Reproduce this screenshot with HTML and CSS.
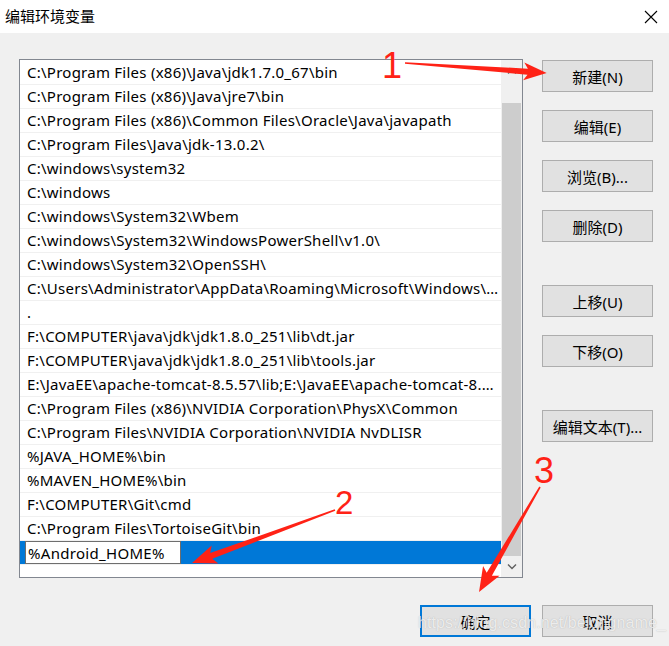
FILE: index.html
```html
<!DOCTYPE html>
<html lang="zh-CN">
<head>
  <meta charset="UTF-8">
  <title>编辑环境变量</title>
  <link rel="stylesheet" href="styles.css">
</head>
<body>
  <!-- 标题栏 -->
  <div class="title-bar">
    <div class="title-text">编辑环境变量</div>
    <div class="close-btn">
      <svg width="14" height="14" viewBox="0 0 14 14"><path d="M1 1 L13 13 M13 1 L1 13" stroke="#000" stroke-width="1.1" fill="none"/></svg>
    </div>
  </div>

  <div class="dialog-body">
    <div class="main-row">
      <!-- 路径列表 -->
      <div class="path-list">
        <div class="list-rows">
          <div class="list-item">C:\Program Files (x86)\Java\jdk1.7.0_67\bin</div>
          <div class="list-item">C:\Program Files (x86)\Java\jre7\bin</div>
          <div class="list-item">C:\Program Files (x86)\Common Files\Oracle\Java\javapath</div>
          <div class="list-item">C:\Program Files\Java\jdk-13.0.2\</div>
          <div class="list-item">C:\windows\system32</div>
          <div class="list-item">C:\windows</div>
          <div class="list-item">C:\windows\System32\Wbem</div>
          <div class="list-item">C:\windows\System32\WindowsPowerShell\v1.0\</div>
          <div class="list-item">C:\windows\System32\OpenSSH\</div>
          <div class="list-item">C:\Users\Administrator\AppData\Roaming\Microsoft\Windows\Start Menu</div>
          <div class="list-item">.</div>
          <div class="list-item">F:\COMPUTER\java\jdk\jdk1.8.0_251\lib\dt.jar</div>
          <div class="list-item">F:\COMPUTER\java\jdk\jdk1.8.0_251\lib\tools.jar</div>
          <div class="list-item">E:\JavaEE\apache-tomcat-8.5.57\lib;E:\JavaEE\apache-tomcat-8.5.57\bin</div>
          <div class="list-item">C:\Program Files (x86)\NVIDIA Corporation\PhysX\Common</div>
          <div class="list-item">C:\Program Files\NVIDIA Corporation\NVIDIA NvDLISR</div>
          <div class="list-item">%JAVA_HOME%\bin</div>
          <div class="list-item">%MAVEN_HOME%\bin</div>
          <div class="list-item">F:\COMPUTER\Git\cmd</div>
          <div class="list-item">C:\Program Files\TortoiseGit\bin</div>
          <div class="list-item selected"><input class="edit-input" type="text" value="%Android_HOME%"></div>
        </div>
        <div class="scrollbar">
          <div class="scroll-arrow">
            <svg width="10" height="6" viewBox="0 0 10 6"><path d="M1 5.5 L5 1.5 L9 5.5" stroke="#606060" stroke-width="1.4" fill="none"/></svg>
          </div>
          <div class="scroll-track"><div class="scroll-thumb"></div></div>
          <div class="scroll-arrow">
            <svg width="10" height="6" viewBox="0 0 10 6"><path d="M1 0.5 L5 4.5 L9 0.5" stroke="#606060" stroke-width="1.4" fill="none"/></svg>
          </div>
        </div>
      </div>

      <!-- 右侧按钮 -->
      <div class="side-buttons">
        <button class="btn">新建(N)</button>
        <button class="btn">编辑(E)</button>
        <button class="btn">浏览(B)...</button>
        <button class="btn">删除(D)</button>
        <button class="btn group-start">上移(U)</button>
        <button class="btn">下移(O)</button>
        <button class="btn group-start">编辑文本(T)...</button>
      </div>
    </div>

    <!-- 底部按钮 -->
    <div class="bottom-row">
      <button class="btn btn-ok">确定</button>
      <button class="btn">取消</button>
    </div>
  </div>

  <!-- 红色标注 -->
  <svg class="annotation" width="669" height="646" viewBox="0 0 669 646">
    <g fill="#ff2216">
      <polygon transform="translate(405,63) rotate(4.03)" points="0,-0.8 123,-3 119,-9 142,0 119,9 123,3 0,0.8"/>
      <polygon transform="translate(335,510) rotate(159.67)" points="0,-0.8 132,-3 128,-9.5 152.5,0 128,9.5 132,3 0,0.8"/>
      <polygon transform="translate(540,487) rotate(120.15)" points="0,-0.8 101,-3 97,-9.5 121.4,0 97,9.5 101,3 0,0.8"/>
      <text class="mark" x="382" y="78" font-size="36">1</text>
      <text class="mark" x="335" y="514" font-size="33">2</text>
      <text class="mark" x="534" y="483" font-size="36">3</text>
    </g>
  </svg>

  <div class="watermark">https://blog.csdn.net/belongname_</div>
</body>
</html>
```

FILE: styles.css
```css
body {
  margin: 0;
  width: 669px;
  height: 646px;
  background: #f0f0f0;
  font-family: "Noto Sans", "Noto Sans CJK SC", sans-serif;
  font-size: 15px;
  color: #000;
  position: relative;
  overflow: hidden;
}
.title-bar {
  height: 33px;
  background: #fff;
  display: flex;
  align-items: center;
  justify-content: space-between;
}
.title-text {
  padding-left: 5px;
  font-family: "Noto Sans CJK SC", sans-serif;
  font-size: 15px;
  padding-bottom: 2px;
}
.close-btn {
  width: 46px;
  height: 33px;
  display: flex;
  align-items: center;
  justify-content: center;
  margin-right: -5px;
}
.dialog-body {
  padding: 26px 16px 0 19px;
}
.main-row {
  display: flex;
  gap: 19px;
}
/* 列表 */
.path-list {
  width: 502px;
  height: 517px;
  border: 1px solid #828790;
  background: #fff;
  display: flex;
}
.list-rows {
  width: 481px;
  padding-top: 1px;
  overflow: hidden;
}
.list-item {
  height: 23px;
  line-height: 23px;
  border-bottom: 1px solid #f0f0f0;
  padding: 0 2px 0 7px;
  font-size: 15px;
  letter-spacing: 0.25px;
  white-space: nowrap;
  overflow: hidden;
  text-overflow: ellipsis;
}
.list-item.selected {
  background: #0078d7;
  padding-left: 5px;
  display: flex;
  align-items: stretch;
}
.edit-input {
  width: 156px;
  height: 23px;
  box-sizing: border-box;
  margin: 0;
  border: 1px solid #6e6e6e;
  padding: 0 0 0 2px;
  font-family: "Noto Sans", "Noto Sans CJK SC", sans-serif;
  font-size: 15px;
  letter-spacing: 0.3px;
  color: #000;
  background: #fff;
  outline: none;
}
.scrollbar {
  width: 21px;
  background: #f0f0f0;
  display: flex;
  flex-direction: column;
}
.scroll-arrow {
  height: 21px;
  display: flex;
  align-items: center;
  justify-content: center;
}
.scroll-track {
  flex: 1;
  padding-top: 22px;
  display: flex;
  justify-content: center;
}
.scroll-thumb {
  width: 19px;
  height: 453px;
  background: #cdcdcd;
}
/* 按钮 */
.btn {
  width: 111px;
  height: 32px;
  box-sizing: border-box;
  background: #e1e1e1;
  border: 1px solid #adadad;
  font-family: "Noto Sans", "Noto Sans CJK SC", sans-serif;
  font-size: 15px;
  color: #000;
  padding: 0;
  margin: 0;
}
.side-buttons {
  display: flex;
  flex-direction: column;
  gap: 18px;
  padding-top: 1px;
}
.side-buttons .group-start {
  margin-top: 25px;
}
.bottom-row {
  display: flex;
  justify-content: flex-end;
  gap: 11px;
  margin-top: 27px;
}
.btn-ok {
  border: 2px solid #0078d7;
}
/* 标注 */
.annotation {
  position: absolute;
  left: 0;
  top: 0;
  pointer-events: none;
}
.mark {
  font-family: "Liberation Sans", sans-serif;
}
.watermark {
  position: absolute;
  left: 418px;
  top: 614px;
  font-family: "Liberation Sans", sans-serif;
  font-size: 16px;
  letter-spacing: 0.1px;
  color: rgba(255, 255, 255, 0.75);
  text-shadow: 0 0 1px rgba(120, 120, 120, 0.5);
  pointer-events: none;
}
```
